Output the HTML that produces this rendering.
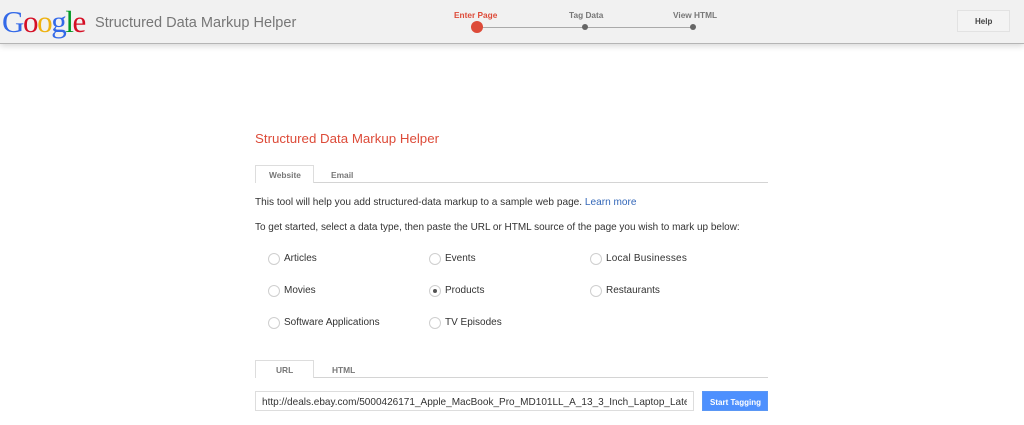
<!DOCTYPE html>
<html><head><meta charset="utf-8"><style>
html,body{margin:0;padding:0;background:#fff;width:1024px;height:425px;overflow:hidden}
#w{position:absolute;left:0;top:0;width:1024px;height:425px;filter:blur(.3px);font-family:"Liberation Sans",sans-serif;color:#333}
.a{position:absolute;white-space:nowrap;line-height:14px}
#hdr{position:absolute;left:0;top:0;width:1024px;height:43px;background:#f1f1f1;border-bottom:1px solid #b5b5b5;box-shadow:0 2px 6px rgba(0,0,0,.16)}
.s{font-size:8.3px;font-weight:bold;color:#777}
.dot{position:absolute;width:6px;height:6px;border-radius:50%;background:#666;top:24px}
.tabtxt{font-size:8.4px;font-weight:bold;color:#777;text-align:center}
.tab{position:absolute;left:255px;width:57px;height:17px;background:#fff;border:1px solid #ddd;border-bottom:none}
.line{position:absolute;left:255px;width:513px;height:1px;background:#d4d4d4}
.r{position:absolute;width:10px;height:10px;border:1px solid #cfcfcf;border-radius:50%;background:#fff}
.l{font-size:10px;color:#333}
</style></head><body><div id="w">
<div id="hdr"></div>
<div class="a" style="left:2px;top:6px;line-height:32px;font-family:'Liberation Serif',serif;font-size:31px;letter-spacing:-1.4px"><span style="color:#3369e8">G</span><span style="color:#d50f25">o</span><span style="color:#eeb211">o</span><span style="color:#3369e8">g</span><span style="color:#009925">l</span><span style="color:#d50f25">e</span></div>
<div class="a" style="left:95px;top:16px;font-size:14.55px;color:#777">Structured Data Markup Helper</div>

<div class="a s" style="left:454px;top:8px;color:#dd4b39">Enter Page</div>
<div class="a s" style="left:569px;top:8px">Tag Data</div>
<div class="a s" style="left:673px;top:8px">View HTML</div>
<div style="position:absolute;left:480px;top:27px;width:213px;height:1px;background:#aaa"></div>
<div style="position:absolute;left:471px;top:21px;width:12px;height:12px;border-radius:50%;background:#dd4b39"></div>
<div class="dot" style="left:582px"></div>
<div class="dot" style="left:690px"></div>

<div style="position:absolute;left:957px;top:10px;width:51px;height:20px;border:1px solid #e2e2e2;background:#f3f3f3"></div>
<div class="a" style="left:975px;top:15px;font-size:8px;font-weight:bold;color:#444">Help</div>

<div class="a" style="left:255px;top:132px;font-size:13.3px;color:#dd4b39">Structured Data Markup Helper</div>

<div class="line" style="top:182px"></div>
<div class="tab" style="top:165px"></div>
<div class="a tabtxt" style="left:269px;top:168px">Website</div>
<div class="a tabtxt" style="left:331px;top:168px">Email</div>

<div class="a" style="left:255px;top:196px;font-size:10.1px">This tool will help you add structured-data markup to a sample web page. <span style="color:#3367b8">Learn more</span></div>
<div class="a" style="left:255px;top:221px;font-size:9.97px">To get started, select a data type, then paste the URL or HTML source of the page you wish to mark up below:</div>

<div class="r" style="left:268px;top:253px"></div><div class="a l" style="left:284px;top:251.6px">Articles</div>
<div class="r" style="left:429px;top:253px"></div><div class="a l" style="left:445px;top:251.6px">Events</div>
<div class="r" style="left:590px;top:253px"></div><div class="a l" style="left:606px;top:251.6px;letter-spacing:.2px">Local Businesses</div>
<div class="r" style="left:268px;top:285px"></div><div class="a l" style="left:284px;top:283.6px">Movies</div>
<div class="r" style="left:429px;top:285px"></div><div style="position:absolute;left:433px;top:289px;width:4px;height:4px;border-radius:50%;background:#555"></div><div class="a l" style="left:445px;top:283.6px">Products</div>
<div class="r" style="left:590px;top:285px"></div><div class="a l" style="left:606px;top:283.6px">Restaurants</div>
<div class="r" style="left:268px;top:317px"></div><div class="a l" style="left:284px;top:315.6px">Software Applications</div>
<div class="r" style="left:429px;top:317px"></div><div class="a l" style="left:445px;top:315.6px">TV Episodes</div>

<div class="line" style="top:377px"></div>
<div class="tab" style="top:360px"></div>
<div class="a tabtxt" style="left:276px;top:363px">URL</div>
<div class="a tabtxt" style="left:332px;top:363px">HTML</div>

<div style="position:absolute;left:255px;top:391px;width:437px;height:18px;border:1px solid #ddd;background:#fff"></div>
<div class="a" style="left:262px;top:396px;width:425px;overflow:hidden;font-size:10.03px;color:#333">http://deals.ebay.com/5000426171_Apple_MacBook_Pro_MD101LL_A_13_3_Inch_Laptop_Latest_Version</div>
<div style="position:absolute;left:702px;top:391px;width:64px;height:18px;background:#4d90fe;border:1px solid #5a97f5"></div>
<div class="a" style="left:710px;top:395.5px;font-size:8px;font-weight:bold;color:#fff">Start Tagging</div>
</div></body></html>
